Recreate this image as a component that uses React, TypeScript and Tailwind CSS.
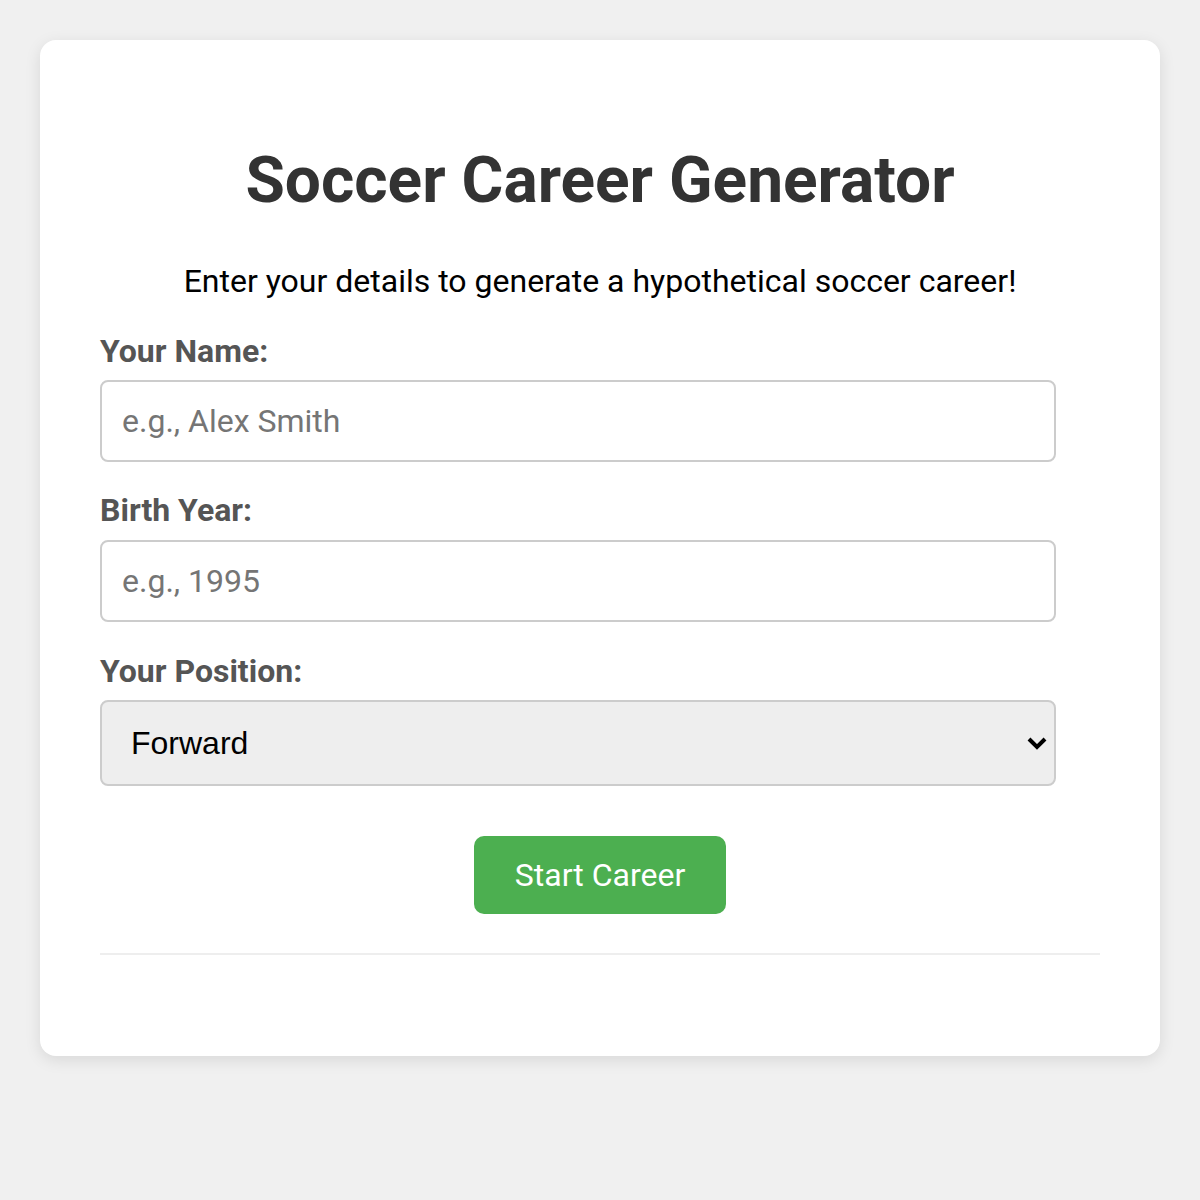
export default function App() {
  const positions = ["Forward", "Midfielder", "Defender", "Goalkeeper"];

  return (
    <div className="min-h-screen bg-[#f0f0f0] p-[40px] font-['Roboto',sans-serif]">
      <div className="w-[1120px] rounded-[16px] bg-white px-[60px] pt-[60px] pb-[60px] shadow-[0_4px_16px_rgba(0,0,0,0.1)]">
        <h1 className="mt-[43px] mb-[45px] text-center text-[64px] font-bold leading-[75px] text-[#333]">
          Soccer Career Generator
        </h1>
        <p className="mb-[32px] text-center text-[32px] leading-[37.5px] text-black">
          Enter your details to generate a hypothetical soccer career!
        </p>

        <label className="mb-[10px] block text-[32px] font-bold leading-[37.5px] text-[#555]">
          Your Name:
        </label>
        <input
          type="text"
          placeholder="e.g., Alex Smith"
          className="mb-[30px] block h-[82px] w-[956px] rounded-[8px] border-2 border-[#ccc] bg-white px-[20px] text-[32px] leading-[38px] text-black outline-none placeholder:text-[#757575]"
        />

        <label className="mb-[10px] block text-[32px] font-bold leading-[37.5px] text-[#555]">
          Birth Year:
        </label>
        <input
          type="text"
          placeholder="e.g., 1995"
          className="mb-[31px] block h-[82px] w-[956px] rounded-[8px] border-2 border-[#ccc] bg-white px-[20px] text-[32px] leading-[38px] text-black outline-none placeholder:text-[#757575]"
        />

        <label className="mb-[10px] block text-[32px] font-bold leading-[37.5px] text-[#555]">
          Your Position:
        </label>
        <div className="relative mb-[50px] w-[956px]">
          <select className="block h-[86px] w-full appearance-none rounded-[8px] border-2 border-[#ccc] bg-[#eee] pl-[29px] pr-[60px] font-['Liberation_Sans',Arial,sans-serif] text-[32px] text-black outline-none">
            {positions.map((p) => (
              <option key={p}>{p}</option>
            ))}
          </select>
          <svg
            className="pointer-events-none absolute right-[8px] top-[35px] h-[16px] w-[22px]"
            viewBox="0 0 22 16"
            fill="none"
            stroke="black"
            strokeWidth={4}
          >
            <path d="M3 4l8 8 8-8" />
          </svg>
        </div>

        <div className="flex justify-center">
          <button className="h-[78px] w-[252px] rounded-[10px] bg-[#4caf50] text-[32px] leading-[38px] text-white">
            Start Career
          </button>
        </div>

        <hr className="mt-[39px] border-t-2 border-[#eee]" />
        <div className="h-[41px]" />
      </div>
    </div>
  );
}
